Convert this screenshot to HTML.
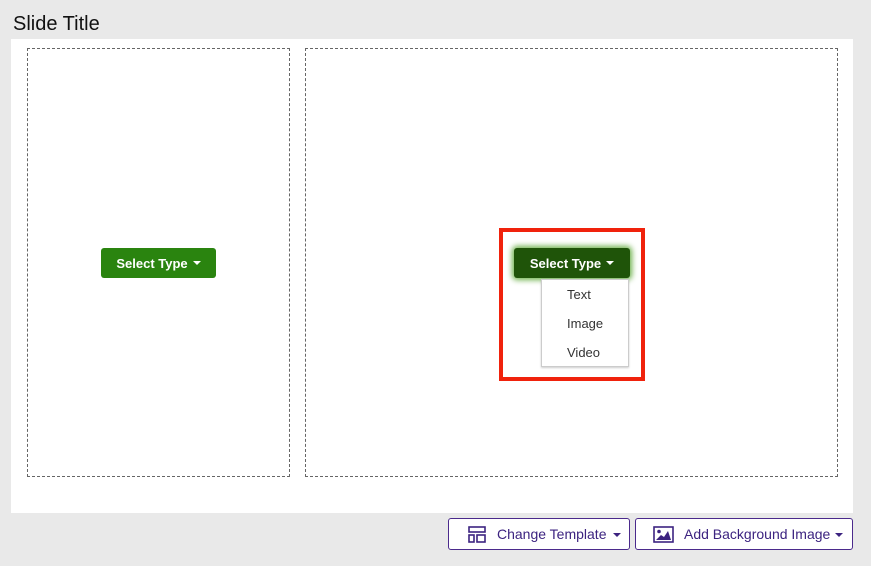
<!DOCTYPE html>
<html><head><style>
*{box-sizing:border-box}
body{margin:0;width:871px;height:566px;background:#e9e9e9;font-family:"Liberation Sans",sans-serif;position:relative;overflow:hidden}
.title{position:absolute;left:13px;top:13px;font-size:20px;color:#111}
.panel{position:absolute;left:11px;top:39px;width:842px;height:474px;background:#fff}
.dash{position:absolute;border:1px dashed #666}
.btn{position:absolute;height:30px;border-radius:3px;color:#fff;font-size:13px;font-weight:bold;display:flex;align-items:center;justify-content:center}
.car{display:inline-block;width:0;height:0;border-left:4px solid transparent;border-right:4px solid transparent;border-top:4px solid currentColor;margin-left:5px}
.red{position:absolute;left:499px;top:228px;width:146px;height:153px;border:4px solid #f0220c}
.menu{position:absolute;left:541px;top:279px;width:88px;height:88px;background:#fff;border:1px solid #ccc;box-shadow:0 1px 2px rgba(0,0,0,.2);font-size:13px;color:#333}
.menu div{position:absolute;left:25px}
.ob{position:absolute;top:518px;height:32px;border:1px solid #4b2a8c;border-radius:3px;background:#fff;color:#3c2380;font-size:14px;display:flex;align-items:center}
</style></head><body>
<div class="title">Slide Title</div>
<div class="panel"></div>
<div class="dash" style="left:27px;top:48px;width:263px;height:429px"></div>
<div class="dash" style="left:305px;top:48px;width:533px;height:429px"></div>
<div class="btn" style="left:101px;top:248px;width:115px;background:#2a840f">Select Type<span class="car"></span></div>
<div class="btn" style="left:514px;top:248px;width:116px;background:#1f5409;box-shadow:0 0 6px 2px #6cb04a">Select Type<span class="car"></span></div>
<div class="red"></div>
<div class="menu"><div style="top:7px">Text</div><div style="top:36px">Image</div><div style="top:65px">Video</div></div>
<div class="ob" style="left:448px;width:182px">
<svg style="position:absolute;left:19px;top:7px" width="18" height="17" viewBox="0 0 18 17" fill="none" stroke="#3c2380" stroke-width="1.6"><rect x="1" y="1" width="16" height="5"/><rect x="1" y="9" width="5" height="7"/><rect x="9" y="9" width="8" height="7"/></svg>
<span style="position:absolute;left:48px">Change Template</span><span class="car" style="position:absolute;left:159px;top:14px"></span></div>
<div class="ob" style="left:635px;width:218px">
<svg style="position:absolute;left:17px;top:7px" width="21" height="17" viewBox="0 0 21 17"><rect x="1" y="1" width="19" height="15" fill="none" stroke="#3c2380" stroke-width="1.6"/><circle cx="6" cy="5.5" r="1.8" fill="#3c2380"/><path d="M3 14L8 9L11 11L15 5L18 14Z" fill="#3c2380"/></svg>
<span style="position:absolute;left:48px">Add Background Image</span><span class="car" style="position:absolute;left:194px;top:14px"></span></div>
</body></html>
